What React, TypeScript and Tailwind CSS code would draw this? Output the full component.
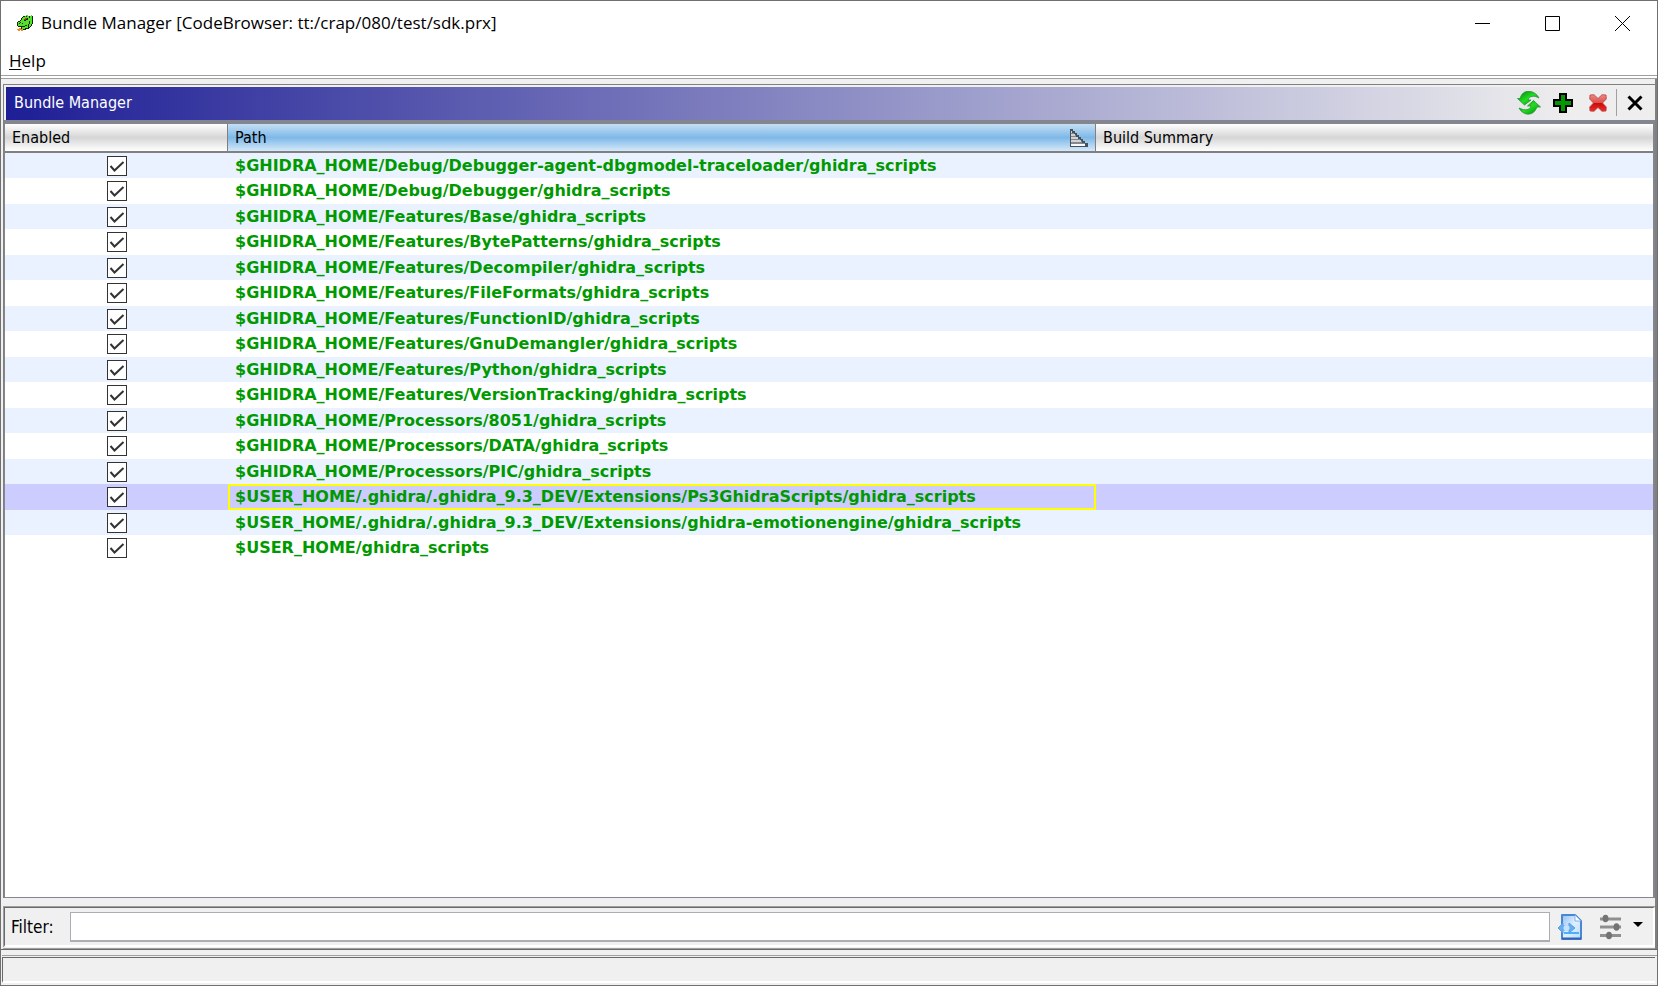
import { useState } from "react";

interface Bundle {
  path: string;
  summary: string;
}

const BUNDLES: Bundle[] = [
  { path: "$GHIDRA_HOME/Debug/Debugger-agent-dbgmodel-traceloader/ghidra_scripts", summary: "" },
  { path: "$GHIDRA_HOME/Debug/Debugger/ghidra_scripts", summary: "" },
  { path: "$GHIDRA_HOME/Features/Base/ghidra_scripts", summary: "" },
  { path: "$GHIDRA_HOME/Features/BytePatterns/ghidra_scripts", summary: "" },
  { path: "$GHIDRA_HOME/Features/Decompiler/ghidra_scripts", summary: "" },
  { path: "$GHIDRA_HOME/Features/FileFormats/ghidra_scripts", summary: "" },
  { path: "$GHIDRA_HOME/Features/FunctionID/ghidra_scripts", summary: "" },
  { path: "$GHIDRA_HOME/Features/GnuDemangler/ghidra_scripts", summary: "" },
  { path: "$GHIDRA_HOME/Features/Python/ghidra_scripts", summary: "" },
  { path: "$GHIDRA_HOME/Features/VersionTracking/ghidra_scripts", summary: "" },
  { path: "$GHIDRA_HOME/Processors/8051/ghidra_scripts", summary: "" },
  { path: "$GHIDRA_HOME/Processors/DATA/ghidra_scripts", summary: "" },
  { path: "$GHIDRA_HOME/Processors/PIC/ghidra_scripts", summary: "" },
  { path: "$USER_HOME/.ghidra/.ghidra_9.3_DEV/Extensions/Ps3GhidraScripts/ghidra_scripts", summary: "" },
  { path: "$USER_HOME/.ghidra/.ghidra_9.3_DEV/Extensions/ghidra-emotionengine/ghidra_scripts", summary: "" },
  { path: "$USER_HOME/ghidra_scripts", summary: "" },
];

// k outline, g body, r eye, o flame
const DRAGON = [
  ".........gg...g.",
  "......kkgkggkggk",
  ".....kggggggkggk",
  "....kgggrrkggggk",
  "....kggrrkkggggk",
  "...kgggkkggggggk",
  ".kkgggggggggkggk",
  "kggkggggggggkggk",
  "kgkggkggggggkggk",
  "kggggggggggkggk.",
  "kgggggggkkgkggk.",
  ".kkkkkkkgggkgk..",
  "....kggggggkk...",
  "..ookgggkkkk....",
  "ooooookkk.......",
  ".oo.oo..........",
];

const DRAGON_COLORS: Record<string, string> = {
  k: "#102a08",
  g: "#55e02a",
  r: "#b5371b",
  o: "#f5871f",
};

function DragonIcon() {
  return (
    <svg width="16" height="16" viewBox="0 0 16 16" shapeRendering="crispEdges" aria-hidden="true">
      {DRAGON.map((row, y) =>
        row
          .split("")
          .map((c, x) =>
            DRAGON_COLORS[c] ? (
              <rect key={`${x}-${y}`} x={x} y={y} width="1" height="1" fill={DRAGON_COLORS[c]} />
            ) : null
          )
      )}
    </svg>
  );
}

function RefreshIcon() {
  return (
    <svg width="24" height="24" viewBox="0 0 24 24" aria-hidden="true">
      <defs>
        <linearGradient id="refresh" x1="0" y1="0" x2="1" y2="1">
          <stop offset="0" stopColor="#067d06" />
          <stop offset="0.5" stopColor="#1fe01f" />
          <stop offset="1" stopColor="#067506" />
        </linearGradient>
      </defs>
      <path
        d="M22 7C18-1 7-2 4 5L3 7.500H.5L7.500 14 14 9h-3C12 5 17 4 22 7Z"
        fill="url(#refresh)"
        stroke="#2a8f38"
        strokeWidth="0.800"
      />
      <path
        d="M2 17c4 8 14 8 17 1l1-2h3.500l-7-6.500L10.500 15H14C13 19 8 20 2 17Z"
        fill="url(#refresh)"
        stroke="#2a8f38"
        strokeWidth="0.800"
      />
    </svg>
  );
}

function PlusIcon() {
  return (
    <svg width="20" height="20" viewBox="0 0 20 20" aria-hidden="true">
      <path d="M7 1h6v6h6v6h-6v6H7v-6H1V7h6z" fill="#009900" stroke="#000" strokeWidth="2" />
    </svg>
  );
}

function DeleteIcon() {
  return (
    <svg width="18" height="18" viewBox="0 0 18 18" aria-hidden="true">
      <defs>
        <linearGradient id="delete" x1="0" y1="0" x2="0" y2="1">
          <stop offset="0" stopColor="#ee8a85" />
          <stop offset="0.480" stopColor="#dd4f4a" />
          <stop offset="0.520" stopColor="#cc0a0a" />
          <stop offset="1" stopColor="#e8302c" />
        </linearGradient>
      </defs>
      <path
        d="M1 1 5 .7 9 4.500 13 .7l4 .3.300 4L13.500 9l3.800 4-.3 4-4 .3L9 13.500 5 17.300 1 17l-.3-4L4.500 9 .7 5z"
        fill="url(#delete)"
        stroke="#b8433f"
        strokeWidth="0.800"
      />
    </svg>
  );
}

function CloseIcon() {
  return (
    <svg width="16" height="16" viewBox="0 0 16 16" aria-hidden="true">
      <path d="M1.500 1.500l13 13M14.500 1.500l-13 13" stroke="#000" strokeWidth="3" />
    </svg>
  );
}

function SortIcon() {
  return (
    <svg width="18" height="18" viewBox="0 0 18 18" shapeRendering="crispEdges" aria-hidden="true">
      <path fill="#43515c" d="M0 0h3v2h2v2h2v2h2v2h2v2h2v2h2v2h3v4H0z" />
      <path fill="#85898d" d="M1 2h1v2h2v2h2v2h2v2h2v2h2v2h2v3H1z" />
      <path fill="#d2d2d2" d="M1 2h1v2H1zM1 5h4v2H1zM1 8h7v2H1zM1 11h10v2H1z" />
      <path fill="#fafafa" d="M1 14h14v3H1z" />
      <path fill="#85898d" d="M1 14h14v1H1z" />
    </svg>
  );
}

function FilterDocIcon() {
  return (
    <svg width="24" height="26" viewBox="0 0 24 26" aria-hidden="true">
      <defs>
        <linearGradient id="doc" x1="0" y1="0" x2="1" y2="1">
          <stop offset="0" stopColor="#8fc0f2" />
          <stop offset="0.500" stopColor="#e0efff" />
          <stop offset="1" stopColor="#b4dcff" />
        </linearGradient>
      </defs>
      <path d="M4 1h13l6 6v18H4z" fill="url(#doc)" stroke="#4a86d2" strokeWidth="2" strokeLinejoin="round" />
      <path d="M17 1v6h6z" fill="#fff" stroke="#7db0ea" />
      <path d="M6 19h15" stroke="#4db0f7" strokeWidth="2" />
      <path d="M4 24.500h19" stroke="#3263b4" strokeWidth="2" />
      <path d="M0 14l5-5v3h6V9l6 5-6 5v-3H5v3z" fill="#67adf0" stroke="#5a9fe6" />
      <circle cx="8.500" cy="14" r="3" fill="#c3e3ff" />
    </svg>
  );
}

function SlidersIcon() {
  return (
    <svg width="21" height="26" viewBox="0 0 21 26" aria-hidden="true">
      <path d="M0 5h21M0 13h21M0 21.500h21" stroke="#8f8f8f" strokeWidth="3" />
      <g fill="#737373">
        <ellipse cx="5.500" cy="4.500" rx="3" ry="3.800" />
        <ellipse cx="16.500" cy="13" rx="3" ry="3.800" />
        <ellipse cx="9" cy="21.500" rx="3" ry="3.800" />
      </g>
    </svg>
  );
}

function TitleBar() {
  return (
    <header className="flex h-11 items-center pl-4 font-['Open_Sans',sans-serif]">
      <DragonIcon />
      <h1 className="ml-2 flex-1 text-[17px] text-black">
        Bundle Manager [CodeBrowser: tt:/crap/080/test/sdk.prx]
      </h1>
      <button aria-label="Minimize" className="flex h-full w-[70px] items-center justify-center">
        <svg width="15" height="15" viewBox="0 0 15 15"><path d="M0 7.500h15" stroke="#000" /></svg>
      </button>
      <button aria-label="Maximize" className="flex h-full w-[70px] items-center justify-center">
        <svg width="15" height="15" viewBox="0 0 15 15"><path d="M.5.500h14v14H.5z" fill="none" stroke="#000" /></svg>
      </button>
      <button aria-label="Close" className="flex h-full w-[70px] items-center justify-center">
        <svg width="15" height="15" viewBox="0 0 15 15"><path d="M0 0l15 15M15 0L0 15" stroke="#000" /></svg>
      </button>
    </header>
  );
}

function PanelHeader() {
  return (
    <div className="mt-0.5 ml-0.5 flex h-[33px] items-center bg-linear-to-r/srgb from-[#1e1e96] to-[#eeeeee] to-95% pr-3 pb-0.5 pl-2">
      <h2 className="flex-1 text-white">Bundle Manager</h2>
      <div className="flex items-center">
        <button aria-label="Refresh" className="mr-3"><RefreshIcon /></button>
        <button aria-label="Add" className="mr-4"><PlusIcon /></button>
        <button aria-label="Remove" className="mr-[9px]"><DeleteIcon /></button>
        <span className="mr-2.5 h-[27px] w-px bg-[#a0a0a0]" />
        <button aria-label="Close panel"><CloseIcon /></button>
      </div>
    </div>
  );
}

interface BundleTableProps {
  selected: number;
  onSelect: (index: number) => void;
}

function BundleTable({ selected, onSelect }: BundleTableProps) {
  const head = "h-[27px] border-r border-[#808080] px-[7px] text-left font-normal";
  const grey = "bg-linear-to-b from-white via-[#d6d6d6] to-white";

  return (
    <table className="w-full table-fixed border-separate border-spacing-0">
      <colgroup>
        <col className="w-[223px]" />
        <col className="w-[868px]" />
        <col />
      </colgroup>
      <thead>
        <tr>
          <th className={`${head} ${grey}`}>Enabled</th>
          <th className={`${head} bg-linear-to-b from-[#c5dff3] via-[#7db8e8] to-[#d5e9f8]`}>
            <div className="flex items-center justify-between">
              Path
              <SortIcon />
            </div>
          </th>
          <th className={`${head} ${grey} border-r-0`}>Build Summary</th>
        </tr>
      </thead>
      <tbody>
        <tr aria-hidden="true">
          <td colSpan={3} className="h-0.5 bg-[#808080]" />
        </tr>
        {BUNDLES.map((bundle, i) => {
          const isSelected = i === selected;
          const stripe = i % 2 === 0 ? "h-[25px] bg-[#ebf2ff]" : "h-[26px] bg-white";
          return (
            <tr
              key={bundle.path}
              onClick={() => onSelect(i)}
              className={isSelected ? "h-[26px] bg-[#ccccff]" : stripe}
            >
              <td className="p-0">
                <label className="mx-auto grid size-5 place-items-center">
                  <input
                    type="checkbox"
                    defaultChecked
                    aria-label={`Enable ${bundle.path}`}
                    className="peer col-start-1 row-start-1 size-5 appearance-none border border-[#333333] bg-white"
                  />
                  <svg
                    width="16"
                    height="16"
                    viewBox="0 0 16 16"
                    className="pointer-events-none col-start-1 row-start-1 hidden peer-checked:block"
                  >
                    <path d="M1.500 8l4 4.500L14.500 4" fill="none" stroke="#333" strokeWidth="2" />
                  </svg>
                </label>
              </td>
              <td
                className={`px-[7px] py-0 font-['DejaVu_Sans',sans-serif] leading-[20px] font-bold whitespace-nowrap text-[#009900] ${
                  isSelected ? "outline-2 -outline-offset-2 outline-[#ffff00]" : ""
                }`}
              >
                {bundle.path}
              </td>
              <td className="px-[7px] py-0">{bundle.summary}</td>
            </tr>
          );
        })}
      </tbody>
    </table>
  );
}

function FilterBar() {
  return (
    <div className="mt-2 border-t border-l border-[#a0a0a0]">
      <div className="flex h-10 items-center border-t border-r-2 border-b-2 border-l border-t-[#696969] border-r-white border-b-white border-l-[#696969] pl-1.5">
        <label htmlFor="filter" className="text-[17px]">Filter:</label>
        <input
          id="filter"
          type="text"
          className="ml-4 h-[30px] min-w-0 flex-1 border border-b-2 border-[#abadb3] bg-white px-1 outline-none"
        />
        <button aria-label="Filter options" className="ml-2"><FilterDocIcon /></button>
        <button aria-label="Filter settings" className="mr-2.5 ml-[18px] flex items-center gap-3">
          <SlidersIcon />
          <svg width="10" height="5" viewBox="0 0 10 5" className="mb-1"><path d="M0 0h10L5 5z" /></svg>
        </button>
      </div>
    </div>
  );
}

export default function App() {
  const [selected, setSelected] = useState(13);

  return (
    <div className="flex min-h-screen flex-col border border-[#707070] bg-white font-['DejaVu_Sans_Condensed','DejaVu_Sans',sans-serif] text-base leading-5 text-black">
      <TitleBar />

      <nav className="h-[30px] px-2 font-['Open_Sans',sans-serif] text-[17px] leading-8">
        <button><span className="underline underline-offset-2">H</span>elp</button>
      </nav>
      <div className="h-1 border-y border-[#a0a0a0] bg-white" />

      <main className="flex flex-1 flex-col border-r-2 border-[#808080] bg-[#f0f0f0] pt-[5px] pl-0.5">
        <section className="flex flex-1 flex-col border-t border-l border-[#808080]">
          <PanelHeader />
          <div className="flex flex-1 flex-col border-t-4 border-r-2 border-b border-l border-[#83868f] bg-white">
            <BundleTable selected={selected} onSelect={setSelected} />
          </div>
        </section>
        <FilterBar />
        <div className="h-0.5 border-b border-[#a0a0a0]" />
      </main>

      <footer className="border-t border-[#696969] bg-[#f0f0f0] pt-[5px] pl-px">
        <div className="h-[30px] border-t border-[#a0a0a0] pt-px">
          <div className="mr-0.5 h-[26px] border-b-2 border-t border-l border-[#696969] border-b-white" />
        </div>
      </footer>
    </div>
  );
}
